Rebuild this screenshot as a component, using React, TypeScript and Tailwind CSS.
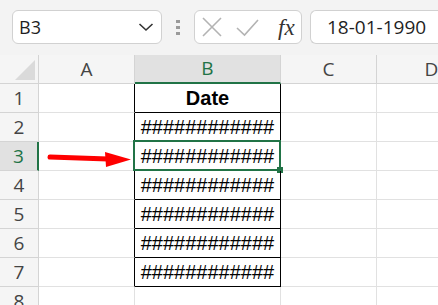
const ui = { fontFamily: '"Open Sans", "Noto Sans", sans-serif' };
const cellFont = { fontFamily: '"Liberation Sans", Arial, sans-serif' };

const rows = [1, 2, 3, 4, 5, 6, 7, 8];

function ColHead({ label, w, selected }: { label: string; w: string; selected?: boolean }) {
  return (
    <div
      className={
        selected
          ? `${w} flex shrink-0 items-center justify-center border-r border-b-2 border-r-[#d4d4d4] border-b-[#217346] bg-[#e1e1e1] text-[19px] text-[#217346]`
          : `${w} flex shrink-0 items-center justify-center border-r border-b border-[#d4d4d4] bg-[#f5f5f5] text-[19px] text-[#444]`
      }
      style={ui}
    >
      {label}
    </div>
  );
}

export default function App() {
  return (
    <div className="relative h-[305px] w-[438px] overflow-hidden bg-white">
      {/* toolbar */}
      <div className="flex h-[55px] items-start bg-[#f3f3f3] pt-[10px]" style={ui}>
        <div className="ml-[12px] flex h-[34px] w-[150px] shrink-0 items-center justify-between rounded-md border border-[#d1d1d1] bg-white pl-[6px] pr-[6px]">
          <span className="text-[18px] text-[#1f1f1f]">B3</span>
          <svg width="16" height="10" viewBox="0 0 16 10" className="mr-[1px]">
            <path d="M1.5 2 L8 8 L14.5 2" fill="none" stroke="#333" strokeWidth="1.6" />
          </svg>
        </div>
        <div className="ml-[14px] flex h-[34px] w-[4px] shrink-0 flex-col items-center justify-center gap-[3px]">
          <div className="h-[3px] w-[4px] bg-[#9a9a9a]" />
          <div className="h-[3px] w-[4px] bg-[#9a9a9a]" />
          <div className="h-[3px] w-[4px] bg-[#9a9a9a]" />
        </div>
        <div className="ml-[14px] flex h-[34px] w-[108px] shrink-0 items-center rounded-md border border-[#d1d1d1] bg-white">
          <svg width="80" height="32" viewBox="0 0 80 32" className="shrink-0">
            <path d="M8 7 L26 25 M26 7 L8 25" fill="none" stroke="#b3b3b3" strokeWidth="1.6" />
            <path d="M42 17 L49.5 24 L63 9" fill="none" stroke="#b3b3b3" strokeWidth="1.6" />
          </svg>
          <span
            className="ml-[3px] text-[23px] italic leading-none text-[#333]"
            style={{ fontFamily: '"Liberation Serif", "DejaVu Serif", serif' }}
          >
            fx
          </span>
        </div>
        <div className="ml-[8px] flex h-[34px] flex-1 items-center rounded-l-md border border-r-0 border-[#d1d1d1] bg-white pl-[16px] text-[19px] text-[#1f1f1f]">
          18-01-1990
        </div>
      </div>

      {/* column headers */}
      <div className="flex h-[29px]">
        <div className="relative w-[39px] shrink-0 border-r border-b border-[#d4d4d4] bg-[#f5f5f5]">
          <svg width="38" height="28" viewBox="0 0 38 28" className="absolute left-0 top-0">
            <path d="M15 25 L35 5 L35 25 Z" fill="#dadada" />
          </svg>
        </div>
        <ColHead label="A" w="w-[96px]" />
        <ColHead label="B" w="w-[146px]" selected />
        <ColHead label="C" w="w-[96px]" />
        <ColHead label="D" w="w-[110px]" />
      </div>

      {/* body rows */}
      {rows.map((r) => {
        const inB = r <= 7;
        const sel = r === 3;
        return (
          <div key={r} className="flex h-[29px]">
            <div
              className={
                sel
                  ? 'flex w-[39px] shrink-0 items-center justify-center border-r-2 border-b border-r-[#217346] border-b-[#d4d4d4] bg-[#e1e1e1] text-[19px] text-[#217346]'
                  : 'flex w-[39px] shrink-0 items-center justify-center border-r border-b border-[#d4d4d4] bg-[#f5f5f5] text-[19px] text-[#444]'
              }
              style={ui}
            >
              {r}
            </div>
            <div
              className={
                inB
                  ? 'w-[96px] shrink-0 border-r border-b border-r-black border-b-[#e1e1e1]'
                  : 'w-[96px] shrink-0 border-r border-b border-[#e1e1e1]'
              }
            />
            <div
              className={
                inB
                  ? 'relative flex w-[146px] shrink-0 items-center justify-center border-r border-b border-black text-[20px] text-black'
                  : 'w-[146px] shrink-0 border-r border-b border-[#e1e1e1]'
              }
              style={cellFont}
            >
              {r === 1 && <span className="font-bold">Date</span>}
              {r > 1 && r <= 7 && <span>############</span>}
              {sel && (
                <div className="pointer-events-none absolute -top-[2px] -left-[2px] -right-[1px] -bottom-[1px] border-2 border-[#217346]">
                  <div className="absolute -right-[4px] -bottom-[4px] h-[6px] w-[6px] bg-[#217346]" />
                </div>
              )}
            </div>
            <div className="w-[96px] shrink-0 border-r border-b border-[#e1e1e1]" />
            <div className="flex-1 border-b border-[#e1e1e1]" />
          </div>
        );
      })}

      {/* red arrow annotation */}
      <svg className="pointer-events-none absolute left-0 top-0" width="438" height="305" viewBox="0 0 438 305">
        <path d="M50 157 L108 159" stroke="#ff0000" strokeWidth="5" strokeLinecap="round" />
        <path d="M105 152 L131 159.5 L106 167 Z" fill="#ff0000" />
      </svg>
    </div>
  );
}
